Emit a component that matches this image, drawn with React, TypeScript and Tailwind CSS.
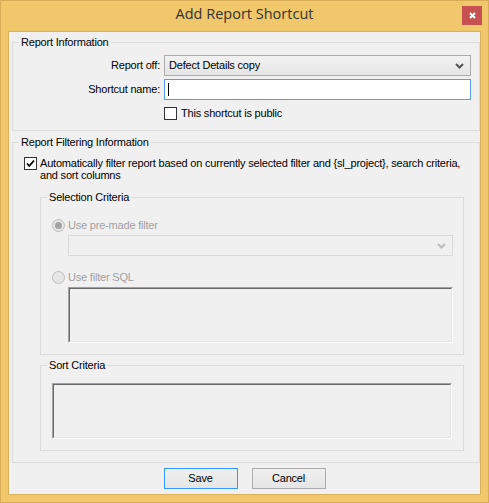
import React from 'react';

const font = { fontFamily: '"Liberation Sans", Arial, sans-serif' };

function Check({ checked }: { checked?: boolean }) {
  return (
    <span className="w-[13px] h-[13px] shrink-0 border border-[#333333] bg-white flex items-center justify-center">
      {checked && (
        <svg width="9" height="9" viewBox="0 0 9 9">
          <path d="M1 4.5 L3.3 7 L8 1.5" fill="none" stroke="#000" strokeWidth="1.8" />
        </svg>
      )}
    </span>
  );
}

function Radio({ checked }: { checked?: boolean }) {
  return (
    <span className="w-[13px] h-[13px] shrink-0 rounded-full border border-[#bcbcbc] bg-[#e6e6e6] flex items-center justify-center">
      {checked && <span className="w-[7px] h-[7px] rounded-full bg-[#a3a3a3]" />}
    </span>
  );
}

function Chevron({ color }: { color: string }) {
  return (
    <svg width="9" height="6" viewBox="0 0 9 6">
      <path d="M1 1 L4.5 4.5 L8 1" fill="none" stroke={color} strokeWidth="2" />
    </svg>
  );
}

function Sunken({ w }: { w: string }) {
  return (
    <div className={`${w} h-[56px] border border-t-[#a0a0a0] border-l-[#a0a0a0] border-r-white border-b-white`}>
      <div className="w-full h-full border border-t-[#696969] border-l-[#696969] border-r-[#e3e3e3] border-b-[#e3e3e3] bg-[#f0f0f0]" />
    </div>
  );
}

function Legend({ children }: { children: React.ReactNode }) {
  return <legend className="ml-[6px] px-[2px] leading-[13px] text-black">{children}</legend>;
}

export default function App() {
  return (
    <div
      className="w-[489px] h-[503px] bg-[#f0c86b] border border-[#d6ad55] flex flex-col text-[11px] leading-[13px] tracking-[-0.2px]"
      style={font}
    >
      {/* Title bar */}
      <div className="h-[30px] grid grid-cols-[1fr_auto_1fr] items-start">
        <div />
        <div
          className="mt-[3px] text-[14.5px] leading-[20px] text-[#333333] tracking-normal"
          style={{ fontFamily: '"Open Sans", "Noto Sans", sans-serif' }}
        >
          Add Report Shortcut
        </div>
        <div className="flex justify-end">
          <div className="mt-[5px] mr-[6px] w-[20px] h-[19px] bg-[#c75050] flex items-center justify-center">
            <svg width="7" height="7" viewBox="0 0 7 7">
              <path d="M1 1 L6 6 M6 1 L1 6" stroke="#fff" strokeWidth="2" />
            </svg>
          </div>
        </div>
      </div>

      {/* Client area */}
      <div className="mx-[7px] h-[464px] bg-[#f0f0f0] border border-[#d9b05c] pl-[3px] flex flex-col">
        {/* Report Information */}
        <fieldset className="mt-[4px] w-[468px] border border-[#dcdcdc]">
          <Legend>Report Information</Legend>
          <div className="pt-[6px] pb-[10px] grid grid-cols-[147px_307px] gap-x-[4px] gap-y-[3px] items-center">
            <div className="text-right">Report off:</div>
            <div className="h-[21px] border border-[#acacac] bg-gradient-to-b from-[#f2f2f2] to-[#e5e5e5] flex items-center justify-between pl-[4px] pr-[6px]">
              <span>Defect Details copy</span>
              <Chevron color="#555555" />
            </div>
            <div className="text-right">Shortcut name:</div>
            <div className="h-[21px] border border-[#569de5] bg-white flex items-center pl-[3px]">
              <span className="w-px h-[13px] bg-black" />
            </div>
            <div />
            <div className="mt-[4px] flex items-center gap-[4px]">
              <Check />
              <span>This shortcut is public</span>
            </div>
          </div>
        </fieldset>

        {/* Report Filtering Information */}
        <fieldset className="mt-[5px] w-[468px] border border-[#dcdcdc]">
          <Legend>Report Filtering Information</Legend>
          <div className="pt-[8px] pl-[11px] pb-[11px] flex flex-col">
            <div className="flex items-start gap-[3px]">
              <Check checked />
              <span className="leading-[12px]">
                Automatically filter report based on currently selected filter and {'{sl_project}'}, search criteria,
                <br />
                and sort columns
              </span>
            </div>

            <fieldset className="mt-[10px] ml-[16px] w-[424px] border border-[#dcdcdc]">
              <Legend>Selection Criteria</Legend>
              <div className="pt-[15px] pl-[11px] pb-[11px] flex flex-col text-[#a0a0a0]">
                <div className="h-[13px] flex items-center gap-[3px]">
                  <Radio checked />
                  <span>Use pre-made filter</span>
                </div>
                <div className="mt-[3px] ml-[16px] w-[385px] h-[21px] border border-[#d9d9d9] bg-[#f0f0f0] flex items-center justify-end pr-[6px]">
                  <Chevron color="#bdbdbd" />
                </div>
                <div className="mt-[15px] h-[13px] flex items-center gap-[3px]">
                  <Radio />
                  <span>Use filter SQL</span>
                </div>
                <div className="mt-[3px] ml-[16px]">
                  <Sunken w="w-[385px]" />
                </div>
              </div>
            </fieldset>

            <fieldset className="mt-[4px] ml-[16px] w-[424px] border border-[#dcdcdc]">
              <Legend>Sort Criteria</Legend>
              <div className="pt-[11px] pl-[11px] pb-[11px]">
                <Sunken w="w-[400px]" />
              </div>
            </fieldset>
          </div>
        </fieldset>

        {/* Buttons */}
        <div className="mt-[5px] flex justify-center gap-[14px] pr-[3px]">
          <button className="w-[74px] h-[21px] border border-[#3399ff] bg-gradient-to-b from-[#f0f0f0] to-[#e5e5e5] text-black">
            Save
          </button>
          <button className="w-[74px] h-[21px] border border-[#adadad] bg-gradient-to-b from-[#f0f0f0] to-[#e5e5e5] text-black">
            Cancel
          </button>
        </div>
      </div>
    </div>
  );
}
